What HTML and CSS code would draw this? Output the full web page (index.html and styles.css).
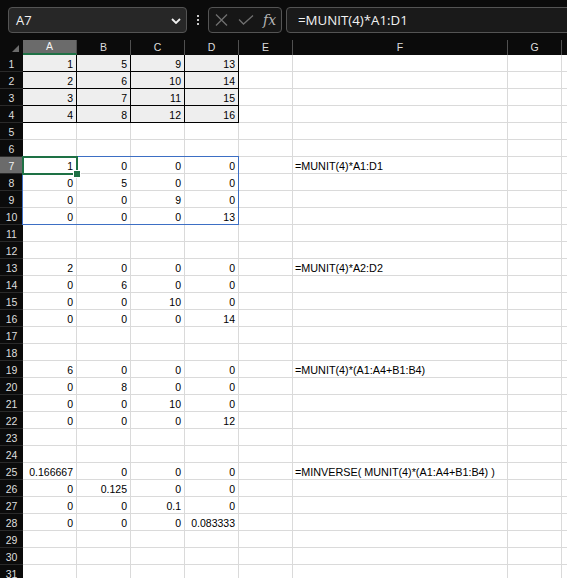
FILE: index.html
```html
<!DOCTYPE html>
<html>
<head>
<meta charset="utf-8">
<link rel="stylesheet" href="styles.css">
</head>
<body>
<div class="app">
  <div class="toolbar">
    <div class="namebox">
      <span class="name">A7</span>
      <svg class="chev" width="10" height="6" viewBox="0 0 10 6"><path d="M1 1 L5 5 L9 1" fill="none" stroke="#f0f0f0" stroke-width="1.8"/></svg>
    </div>
    <div class="dots"><span></span><span></span><span></span></div>
    <div class="btnbox">
      <svg width="13" height="12" viewBox="0 0 13 12"><path d="M1 0.5 L12 11.5 M12 0.5 L1 11.5" stroke="#6f6f6f" stroke-width="1.3"/></svg>
      <svg width="16" height="10" viewBox="0 0 16 10"><path d="M1 4.5 L5.5 9 L15 0.5" fill="none" stroke="#6f6f6f" stroke-width="1.3"/></svg>
      <span class="fx">fx</span>
    </div>
    <div class="formula">=MUNIT(4)*A1:D1</div>
  </div>
  <div class="sheet">
    <div class="corner"><span class="tri"></span></div>
    <div class="ch sel">A</div><div class="ch">B</div><div class="ch">C</div><div class="ch">D</div><div class="ch">E</div><div class="ch">F</div><div class="ch">G</div><div class="ch"></div>

    <div class="rh">1</div><div class="c k">1</div><div class="c k">5</div><div class="c k">9</div><div class="c k">13</div><div class="c"></div><div class="c"></div><div class="c"></div><div class="c"></div>
    <div class="rh">2</div><div class="c k">2</div><div class="c k">6</div><div class="c k">10</div><div class="c k">14</div><div class="c"></div><div class="c"></div><div class="c"></div><div class="c"></div>
    <div class="rh">3</div><div class="c k">3</div><div class="c k">7</div><div class="c k">11</div><div class="c k">15</div><div class="c"></div><div class="c"></div><div class="c"></div><div class="c"></div>
    <div class="rh">4</div><div class="c k">4</div><div class="c k">8</div><div class="c k">12</div><div class="c k">16</div><div class="c"></div><div class="c"></div><div class="c"></div><div class="c"></div>
    <div class="rh">5</div><div class="c"></div><div class="c"></div><div class="c"></div><div class="c"></div><div class="c"></div><div class="c"></div><div class="c"></div><div class="c"></div>
    <div class="rh">6</div><div class="c"></div><div class="c"></div><div class="c"></div><div class="c"></div><div class="c"></div><div class="c"></div><div class="c"></div><div class="c"></div>
    <div class="rh sel">7</div><div class="c">1</div><div class="c">0</div><div class="c">0</div><div class="c">0</div><div class="c"></div><div class="c t">=MUNIT(4)*A1:D1</div><div class="c"></div><div class="c"></div>
    <div class="rh">8</div><div class="c">0</div><div class="c">5</div><div class="c">0</div><div class="c">0</div><div class="c"></div><div class="c"></div><div class="c"></div><div class="c"></div>
    <div class="rh">9</div><div class="c">0</div><div class="c">0</div><div class="c">9</div><div class="c">0</div><div class="c"></div><div class="c"></div><div class="c"></div><div class="c"></div>
    <div class="rh">10</div><div class="c">0</div><div class="c">0</div><div class="c">0</div><div class="c">13</div><div class="c"></div><div class="c"></div><div class="c"></div><div class="c"></div>
    <div class="rh">11</div><div class="c"></div><div class="c"></div><div class="c"></div><div class="c"></div><div class="c"></div><div class="c"></div><div class="c"></div><div class="c"></div>
    <div class="rh">12</div><div class="c"></div><div class="c"></div><div class="c"></div><div class="c"></div><div class="c"></div><div class="c"></div><div class="c"></div><div class="c"></div>
    <div class="rh">13</div><div class="c">2</div><div class="c">0</div><div class="c">0</div><div class="c">0</div><div class="c"></div><div class="c t">=MUNIT(4)*A2:D2</div><div class="c"></div><div class="c"></div>
    <div class="rh">14</div><div class="c">0</div><div class="c">6</div><div class="c">0</div><div class="c">0</div><div class="c"></div><div class="c"></div><div class="c"></div><div class="c"></div>
    <div class="rh">15</div><div class="c">0</div><div class="c">0</div><div class="c">10</div><div class="c">0</div><div class="c"></div><div class="c"></div><div class="c"></div><div class="c"></div>
    <div class="rh">16</div><div class="c">0</div><div class="c">0</div><div class="c">0</div><div class="c">14</div><div class="c"></div><div class="c"></div><div class="c"></div><div class="c"></div>
    <div class="rh">17</div><div class="c"></div><div class="c"></div><div class="c"></div><div class="c"></div><div class="c"></div><div class="c"></div><div class="c"></div><div class="c"></div>
    <div class="rh">18</div><div class="c"></div><div class="c"></div><div class="c"></div><div class="c"></div><div class="c"></div><div class="c"></div><div class="c"></div><div class="c"></div>
    <div class="rh">19</div><div class="c">6</div><div class="c">0</div><div class="c">0</div><div class="c">0</div><div class="c"></div><div class="c t">=MUNIT(4)*(A1:A4+B1:B4)</div><div class="c"></div><div class="c"></div>
    <div class="rh">20</div><div class="c">0</div><div class="c">8</div><div class="c">0</div><div class="c">0</div><div class="c"></div><div class="c"></div><div class="c"></div><div class="c"></div>
    <div class="rh">21</div><div class="c">0</div><div class="c">0</div><div class="c">10</div><div class="c">0</div><div class="c"></div><div class="c"></div><div class="c"></div><div class="c"></div>
    <div class="rh">22</div><div class="c">0</div><div class="c">0</div><div class="c">0</div><div class="c">12</div><div class="c"></div><div class="c"></div><div class="c"></div><div class="c"></div>
    <div class="rh">23</div><div class="c"></div><div class="c"></div><div class="c"></div><div class="c"></div><div class="c"></div><div class="c"></div><div class="c"></div><div class="c"></div>
    <div class="rh">24</div><div class="c"></div><div class="c"></div><div class="c"></div><div class="c"></div><div class="c"></div><div class="c"></div><div class="c"></div><div class="c"></div>
    <div class="rh">25</div><div class="c">0.166667</div><div class="c">0</div><div class="c">0</div><div class="c">0</div><div class="c"></div><div class="c t">=MINVERSE( MUNIT(4)*(A1:A4+B1:B4) )</div><div class="c"></div><div class="c"></div>
    <div class="rh">26</div><div class="c">0</div><div class="c">0.125</div><div class="c">0</div><div class="c">0</div><div class="c"></div><div class="c"></div><div class="c"></div><div class="c"></div>
    <div class="rh">27</div><div class="c">0</div><div class="c">0</div><div class="c">0.1</div><div class="c">0</div><div class="c"></div><div class="c"></div><div class="c"></div><div class="c"></div>
    <div class="rh">28</div><div class="c">0</div><div class="c">0</div><div class="c">0</div><div class="c">0.083333</div><div class="c"></div><div class="c"></div><div class="c"></div><div class="c"></div>
    <div class="rh">29</div><div class="c"></div><div class="c"></div><div class="c"></div><div class="c"></div><div class="c"></div><div class="c"></div><div class="c"></div><div class="c"></div>
    <div class="rh">30</div><div class="c"></div><div class="c"></div><div class="c"></div><div class="c"></div><div class="c"></div><div class="c"></div><div class="c"></div><div class="c"></div>
    <div class="rh">31</div><div class="c"></div><div class="c"></div><div class="c"></div><div class="c"></div><div class="c"></div><div class="c"></div><div class="c"></div><div class="c"></div>

    <div class="range"></div>
    <div class="active"><span class="handle"></span></div>
  </div>
</div>
</body>
</html>
```
FILE: styles.css
```css
* { box-sizing: border-box; }
html, body { margin: 0; padding: 0; background: #ffffff; }
body { font-family: "Liberation Sans", Arial, sans-serif; }
.app { width: 567px; height: 578px; overflow: hidden; background: #fff; }

.toolbar {
  height: 40px;
  background: #0b0b0b;
  display: flex;
  align-items: flex-start;
  padding: 7px 0 0 8px;
  overflow: hidden;
}
.toolbar > * { flex-shrink: 0; }
.namebox {
  width: 179px;
  height: 26px;
  background: #272727;
  border: 1px solid #545454;
  border-radius: 4px;
  display: flex;
  align-items: center;
  justify-content: space-between;
  padding: 0 5px 0 7px;
}
.name { color: #f2f2f2; font-size: 13px; font-family: "Open Sans", sans-serif; }
.chev { margin-top: 1px; }
.dots {
  width: 21px;
  height: 26px;
  display: flex;
  flex-direction: column;
  align-items: center;
  justify-content: center;
  gap: 2px;
}
.dots span { width: 2px; height: 2px; background: #c8c8c8; }
.btnbox {
  width: 74px;
  height: 26px;
  border: 1px solid #545454;
  border-radius: 4px;
  background: #161616;
  display: flex;
  align-items: center;
  padding: 0 0 0 6px;
  gap: 10px;
}
.fx {
  font-family: "DejaVu Serif", "Liberation Serif", serif;
  font-style: italic;
  color: #b4b4b4;
  font-size: 14px;
  margin-left: -1px;
}
.formula {
  width: 300px;
  height: 26px;
  margin-left: 4px;
  background: #1a1a1a;
  border: 1px solid #545454;
  border-radius: 4px;
  color: #f2f2f2;
  font-family: "Open Sans", sans-serif;
  font-size: 13.3px;
  line-height: 24px;
  padding-left: 11px;
}

.sheet {
  position: relative;
  display: grid;
  grid-template-columns: 23px 54px 54px 54px 54px 54px 215px 54px 54px;
  grid-template-rows: 15px repeat(31, 17px);
  font-size: 10.5px;
}
.corner {
  background: #0b0b0b;
  position: relative;
}
.tri {
  position: absolute;
  right: 4px;
  bottom: 3px;
  width: 0; height: 0;
  border-left: 7px solid transparent;
  border-bottom: 7px solid #6b6b6b;
}
.ch {
  background: #0b0b0b;
  color: #dedede;
  border-right: 1px solid #505050;
  text-align: center;
  line-height: 14px;
  font-size: 10.5px;
}
.ch.sel {
  background: #6b6b6b;
  color: #f4f4f4;
  border-bottom: 2px solid #1e7145;
  line-height: 13px;
}
.rh {
  background: #0b0b0b;
  color: #dedede;
  border-bottom: 1px solid #2a2a2a;
  display: flex;
  align-items: flex-end;
  justify-content: center;
  line-height: 13px;
}
.rh.sel { background: #6b6b6b; color: #f4f4f4; }
.c {
  border-right: 1px solid #dadada;
  border-bottom: 1px solid #dadada;
  color: #000;
  display: flex;
  align-items: flex-end;
  justify-content: flex-end;
  padding-right: 3px;
  line-height: 13px;
  white-space: nowrap;
}
.c.t { justify-content: flex-start; padding-left: 2px; padding-right: 0; overflow: visible; font-size: 10.8px; }
.c.k { background: #eeeeee; border-right-color: #000; border-bottom-color: #000; }

.range {
  position: absolute;
  grid-row: 8 / 12;
  grid-column: 2 / 6;
  top: -1px; left: -1px; right: 0; bottom: 0;
  border: 1px solid #3d6fc4;
  pointer-events: none;
}
.active {
  position: absolute;
  grid-row: 8 / 9;
  grid-column: 2 / 3;
  top: -1px; left: -1px; right: -1px; bottom: -1px;
  border: 2px solid #1e7145;
  pointer-events: none;
}
.handle {
  position: absolute;
  right: -4px;
  bottom: -4px;
  width: 6px;
  height: 6px;
  background: #1e7145;
  outline: 1px solid #ffffff;
}
```
